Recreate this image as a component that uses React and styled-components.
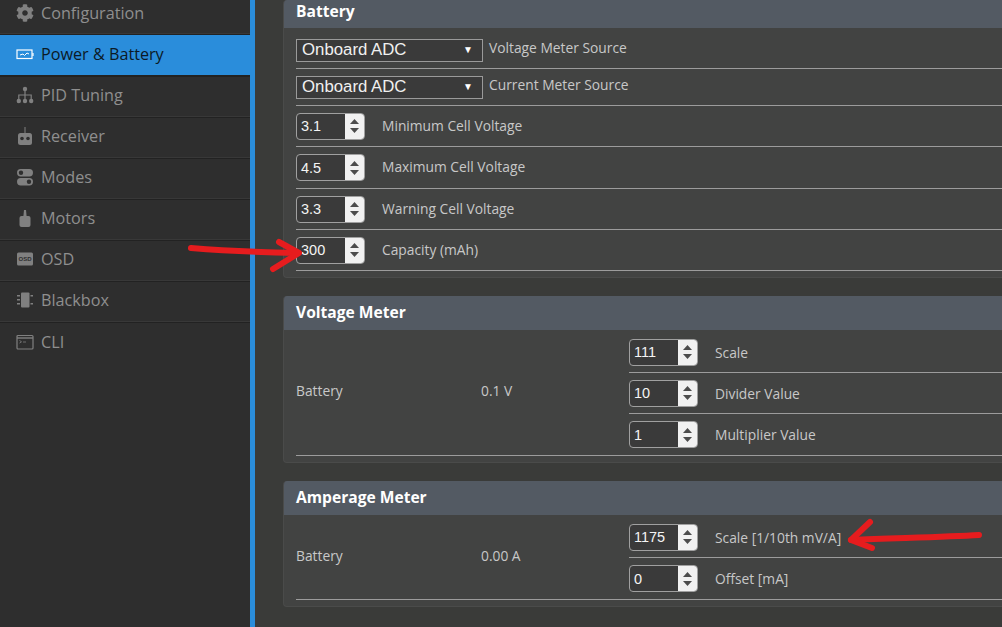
import React from 'react'
import styled, { createGlobalStyle } from 'styled-components'
import { FaCog } from 'react-icons/fa'

const GlobalStyle = createGlobalStyle`
  html, body {
    margin: 0;
    padding: 0;
    height: 100%;
    overflow: hidden;
    background: #3a3b39;
  }
  * {
    box-sizing: border-box;
  }
`

const Page = styled.div`
  position: relative;
  display: flex;
  width: 1002px;
  height: 627px;
  overflow: hidden;
  font-family: 'Open Sans', sans-serif;
`

const Sidebar = styled.nav`
  flex: 0 0 255px;
  height: 100%;
  background: #2e2e2e;
  border-right: 5px solid #2a8ddb;
`

const NavItem = styled.div`
  display: flex;
  align-items: center;
  height: ${props => (props.first ? '35px' : props.active ? '42px' : '41px')};
  padding: ${props => (props.first ? '0 0 8px 16px' : props.active ? '0 0 3px 16px' : '0 0 4px 16px')};
  gap: 7px;
  font-size: 16.2px;
  color: ${props => (props.active ? '#0c1a26' : '#8f8f8f')};
  background: ${props => (props.active ? '#2a8ddb' : 'transparent')};
  border-bottom: ${props => (props.active ? '2px solid #222222' : '1px solid #222222')};
  box-shadow: inset 0 -1px 0 ${props => (props.active ? 'transparent' : '#383838')};
  &:last-child {
    border-bottom: 0;
    box-shadow: none;
  }
  svg {
    flex: 0 0 18px;
    width: 18px;
    height: 18px;
    color: ${props => (props.active ? '#ffffff' : '#808080')};
  }
`

const Main = styled.main`
  flex: 0 0 auto;
  width: 800px;
  padding-left: 28px;
  display: flex;
  flex-direction: column;
  gap: 18px;
`

const Panel = styled.section`
  width: 760px;
  background: #424342;
  border: 1px solid #4a4b4a;
  border-top: 0;
  border-radius: 4px;
  overflow: hidden;
  padding-bottom: 6px;
`

const PanelHeader = styled.h2`
  display: flex;
  align-items: center;
  margin: 0;
  height: ${props => props.h || '34px'};
  padding: ${props => (props.h ? '0 0 6px 12px' : '0 0 3px 12px')};
  background: #535a63;
  color: #ffffff;
  font-size: 15.6px;
  font-weight: 700;
`

const Row = styled.div`
  display: flex;
  align-items: center;
  height: ${props => props.h || '41px'};
  padding-top: ${props => props.top || '0'};
  border-bottom: 1px solid #9c9c9c;
`

const Select = styled.div`
  position: relative;
  display: flex;
  align-items: center;
  width: 187px;
  height: 23px;
  padding-left: 5px;
  border: 1px solid #9a9a9a;
  background: #3a3a3a;
  color: #f0f0f0;
  font-family: 'Liberation Sans', sans-serif;
  font-size: 16.8px;
`

const Caret = styled.span`
  position: absolute;
  right: 9px;
  top: 4px;
  font-size: 10px;
  color: #ffffff;
`

const SelectLabel = styled.span`
  margin: 0 0 5px 6px;
  font-size: 13.8px;
  color: #c8c8c8;
`

const NumberBox = styled.div`
  display: flex;
  flex: 0 0 69px;
  width: 69px;
  height: 27px;
  border: 1px solid #a0a0a0;
  border-radius: 4px;
  background: #3a3a3a;
  overflow: hidden;
`

const NumberValue = styled.span`
  flex: 1;
  align-self: center;
  padding-left: 4px;
  color: #f4f4f4;
  font-family: 'Liberation Sans', sans-serif;
  font-size: 14.5px;
`

const Spinner = styled.span`
  display: flex;
  flex-direction: column;
  align-items: center;
  justify-content: center;
  gap: 4px;
  width: 19px;
  background: #f1f1f1;
  svg {
    width: 9px;
    height: 5px;
    fill: #4c4c4c;
  }
`

const FieldLabel = styled.span`
  margin-left: 17px;
  font-size: 13.8px;
  color: #c8c8c8;
`

const Rows = styled.div`
  padding-left: 12px;
  ${FieldLabel} {
    margin-bottom: 2px;
  }
`

const MeterTable = styled.div`
  display: grid;
  grid-template-columns: 185px 148px 1fr;
  align-items: center;
  margin-left: 12px;
  padding-top: 2px;
  border-bottom: 1px solid #9c9c9c;
`

const MeterCell = styled.span`
  margin-bottom: 6px;
  font-size: 13.8px;
  color: #c8c8c8;
`

const MeterFields = styled.div`
  ${Row}:last-child {
    border-bottom: 0;
  }
`

const Arrows = styled.svg`
  position: absolute;
  left: 0;
  top: 0;
  pointer-events: none;
`

const icons = {
  battery: (
    <svg viewBox="0 0 18 18" fill="none" stroke="currentColor">
      <rect x="1" y="5" width="15" height="8.5" strokeWidth="1.2" />
      <path d="M17 8v3" strokeWidth="1.2" />
      <path d="M4 10l3-1 1.5 1.5L11 8l2 1" strokeWidth="1" />
    </svg>
  ),
  pid: (
    <svg viewBox="0 0 18 18" fill="currentColor">
      <circle cx="9" cy="3" r="2.2" />
      <circle cx="2.8" cy="15" r="2.2" />
      <circle cx="9" cy="15" r="2.2" />
      <circle cx="15.2" cy="15" r="2.2" />
      <path d="M8.4 5h1.2v3.4h6.2V13h-1.2V9.6H9.6V13H8.4V9.6H3.4V13H2.2V8.4h6.2z" />
    </svg>
  ),
  receiver: (
    <svg viewBox="0 0 18 18">
      <path d="M8.5 0h1v6h-1z" fill="currentColor" />
      <rect x="2" y="6" width="14" height="12" rx="2.5" fill="currentColor" />
      <circle cx="6" cy="11.5" r="1.8" fill="#2e2e2e" />
      <circle cx="12" cy="11.5" r="1.8" fill="#2e2e2e" />
    </svg>
  ),
  modes: (
    <svg viewBox="0 0 18 18">
      <rect x="1" y="1" width="16" height="7.4" rx="3.7" fill="currentColor" />
      <circle cx="5" cy="4.7" r="2.2" fill="#2e2e2e" />
      <rect x="1" y="10" width="16" height="7.4" rx="3.7" fill="currentColor" />
      <circle cx="13" cy="13.7" r="2.2" fill="#2e2e2e" />
    </svg>
  ),
  motors: (
    <svg viewBox="0 0 18 18" fill="currentColor">
      <path d="M8 1h2l.6 6H7.4z" />
      <rect x="3.5" y="7" width="11" height="11" rx="2" />
    </svg>
  ),
  osd: (
    <svg viewBox="0 0 18 18">
      <rect x="1" y="2.5" width="16" height="13" rx="1.5" fill="currentColor" />
      <text x="9" y="11.4" textAnchor="middle" fontSize="6" fontWeight="700" fontFamily="'Liberation Sans', sans-serif" fill="#2e2e2e">OSD</text>
    </svg>
  ),
  blackbox: (
    <svg viewBox="0 0 18 18" fill="currentColor">
      <rect x="5" y="1.5" width="8.5" height="15" rx="1" />
      <path d="M1 4h3v1.4H1zM1 8h3v1.4H1zM1 12h3v1.4H1zM14.5 4H17v1.4h-2.5zM14.5 12H17v1.4h-2.5z" />
    </svg>
  ),
  cli: (
    <svg viewBox="0 0 18 18" fill="none" stroke="currentColor">
      <rect x="1" y="2.5" width="16" height="13.5" rx="1" strokeWidth="1.2" />
      <path d="M1 5h16" strokeWidth="1.4" />
      <path d="M3.5 7.5l2 1.3-2 1.3M7 9h3" strokeWidth="0.8" />
    </svg>
  )
}

const navItems = [
  { label: 'Configuration', icon: <FaCog />, first: true },
  { label: 'Power & Battery', icon: icons.battery, active: true },
  { label: 'PID Tuning', icon: icons.pid },
  { label: 'Receiver', icon: icons.receiver },
  { label: 'Modes', icon: icons.modes },
  { label: 'Motors', icon: icons.motors },
  { label: 'OSD', icon: icons.osd },
  { label: 'Blackbox', icon: icons.blackbox },
  { label: 'CLI', icon: icons.cli }
]

const NumberField = ({ value, label }) => (
  <>
    <NumberBox>
      <NumberValue>{value}</NumberValue>
      <Spinner>
        <svg viewBox="0 0 9 5"><path d="M4.5 0L9 5H0z" /></svg>
        <svg viewBox="0 0 9 5"><path d="M0 0h9L4.5 5z" /></svg>
      </Spinner>
    </NumberBox>
    <FieldLabel>{label}</FieldLabel>
  </>
)

const SourceRow = ({ label, h, top }) => (
  <Row h={h} top={top}>
    <Select>
      Onboard ADC
      <Caret>▼</Caret>
    </Select>
    <SelectLabel>{label}</SelectLabel>
  </Row>
)

const Meter = ({ title, reading, fields }) => (
  <Panel>
    <PanelHeader>{title}</PanelHeader>
    <MeterTable>
      <MeterCell>Battery</MeterCell>
      <MeterCell>{reading}</MeterCell>
      <MeterFields>
        {fields.map(field => (
          <Row key={field.label}>
            <NumberField value={field.value} label={field.label} />
          </Row>
        ))}
      </MeterFields>
    </MeterTable>
  </Panel>
)

const App = () => (
  <Page>
    <GlobalStyle />
    <Sidebar>
      {navItems.map(item => (
        <NavItem key={item.label} first={item.first} active={item.active}>
          {item.icon}
          {item.label}
        </NavItem>
      ))}
    </Sidebar>
    <Main>
      <Panel>
        <PanelHeader h="28px">Battery</PanelHeader>
        <Rows>
          <SourceRow label="Voltage Meter Source" h="41px" top="4px" />
          <SourceRow label="Current Meter Source" h="37px" />
          <Row><NumberField value="3.1" label="Minimum Cell Voltage" /></Row>
          <Row h="42px"><NumberField value="4.5" label="Maximum Cell Voltage" /></Row>
          <Row><NumberField value="3.3" label="Warning Cell Voltage" /></Row>
          <Row><NumberField value="300" label="Capacity (mAh)" /></Row>
        </Rows>
      </Panel>
      <Meter
        title="Voltage Meter"
        reading="0.1 V"
        fields={[
          { value: '111', label: 'Scale' },
          { value: '10', label: 'Divider Value' },
          { value: '1', label: 'Multiplier Value' }
        ]}
      />
      <Meter
        title="Amperage Meter"
        reading="0.00 A"
        fields={[
          { value: '1175', label: 'Scale [1/10th mV/A]' },
          { value: '0', label: 'Offset [mA]' }
        ]}
      />
    </Main>
    <Arrows width="1002" height="627" viewBox="0 0 1002 627" fill="none" stroke="#e61c1e" strokeWidth="6" strokeLinecap="round" strokeLinejoin="round">
      <path d="M191 248C215 250 240 252 298 253" />
      <path d="M279 242L299 253L273 269" />
      <path d="M979 535C945 537 900 538 851 540" />
      <path d="M870 522L851 540L872 548" />
    </Arrows>
  </Page>
)

export default App
